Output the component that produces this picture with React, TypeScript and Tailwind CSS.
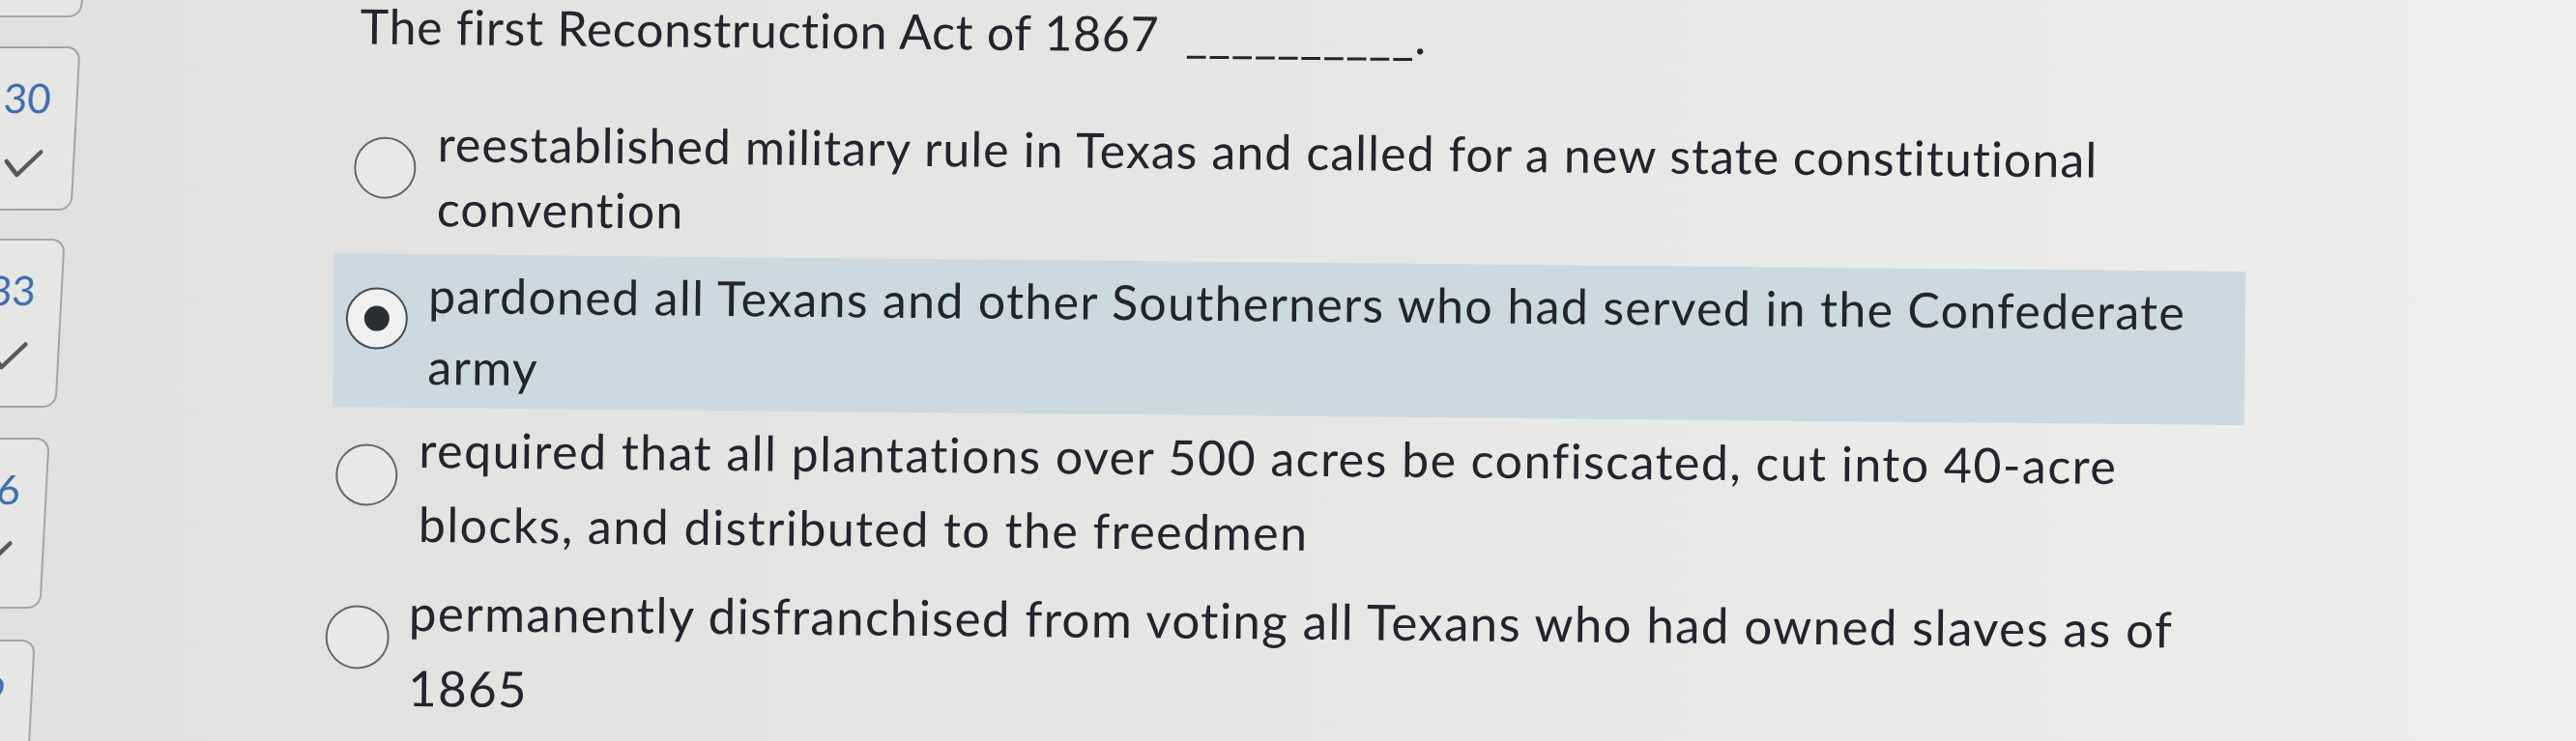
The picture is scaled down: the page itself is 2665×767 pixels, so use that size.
import React from 'react';

// Left rail of question tiles (only their right halves show at the page edge)
const tiles = [
  { id: 'a', num: '', cls: 'ml-[-11px] mt-[-142px] h-[160px]' },
  { id: 'b', num: '30', cls: 'ml-[-21px] mt-[30px] h-[170px]' },
  { id: 'c', num: '33', cls: 'ml-[-37px] mt-[29px] h-[175px]' },
  { id: 'd', num: '6', cls: 'ml-[-53px] mt-[31px] h-[177px]' },
  { id: 'e', num: '9', cls: 'ml-[-68px] mt-[32px] h-[180px]' },
];

const options = [
  {
    lines: ['reestablished military rule in Texas and called for a new state constitutional', 'convention'],
    row: 'ml-[248px] mt-[60px] gap-[22px]',
    text: 'text-[50px] leading-[67px] tracking-[0.022em]',
    radio: 'mt-[27px] size-[64px]',
  },
  {
    lines: ['pardoned all Texans and other Southerners who had served in the Confederate', 'army'],
    row: 'gap-[21px]',
    text: 'text-[50px] leading-[74px] tracking-[0.027em]',
    radio: 'mt-[30px] size-[64px]',
    selected: true,
  },
  {
    lines: ['required that all plantations over 500 acres be confiscated, cut into 40-acre', 'blocks, and distributed to the freedmen'],
    row: 'ml-[232px] mt-[5px] gap-[22px]',
    text: 'text-[50px] leading-[77px] tracking-[0.03em]',
    radio: 'mt-[33px] size-[64px]',
  },
  {
    lines: ['permanently disfranchised from voting all Texans who had owned slaves as of', '1865'],
    row: 'ml-[223px] mt-[14px] gap-[20px]',
    text: 'text-[51px] leading-[78px] tracking-[0.027em]',
    radio: 'mt-[32px] size-[66px]',
  },
];

const Check = () => (
  <svg width="40" height="30" viewBox="0 0 40 30" fill="none">
    <polyline points="2.5,12 14,26 37.5,2.5" stroke="#56595f" strokeWidth="4.5" strokeLinecap="round" strokeLinejoin="round" />
  </svg>
);

const Radio: React.FC<{ selected?: boolean; className: string }> = ({ selected, className }) => (
  <div
    className={`${className} shrink-0 rounded-full border-[2.5px] flex items-center justify-center ${
      selected ? 'border-[#4a4d53] bg-[#eff0ef]' : 'border-[#63666c] bg-[#e8e9e6]'
    }`}
  >
    {selected && <div className="size-[26px] rounded-full bg-[#2b2e33]" />}
  </div>
);

type Opt = (typeof options)[number];

const OptionRow: React.FC<{ opt: Opt }> = ({ opt }) => (
  <div className={`flex items-start ${opt.row}`}>
    <Radio selected={opt.selected} className={opt.radio} />
    <div className={`${opt.text} text-[#22252e] whitespace-nowrap`}>
      {opt.lines.map((l) => (
        <div key={l}>{l}</div>
      ))}
    </div>
  </div>
);

export default function App() {
  return (
    <div className="w-full h-[767px] overflow-hidden flex bg-linear-to-r from-[#e1e2df] via-[#e6e7e4] to-[#eeeeec] font-['Lato',sans-serif]">
      {/* question tiles */}
      <div className="w-[120px] shrink-0 flex flex-col">
        {tiles.map((t) => (
          <div
            key={t.id}
            className={`${t.cls} w-[100px] shrink-0 -skew-x-3 rounded-[14px] border-2 border-[#a3a5a7] bg-[#e6e7e4] flex flex-col items-end`}
          >
            {t.num && (
              <>
                <span className="pr-[26px] pt-[30px] text-[42px] leading-none text-[#3f6fb0]">{t.num}</span>
                <div className="pr-[31px] mt-[33px]">
                  <Check />
                </div>
              </>
            )}
          </div>
        ))}
      </div>

      {/* question body (slightly rotated like the photographed screen) */}
      <div className="flex-1 origin-top-left rotate-[0.55deg] flex flex-col">
        <h1 className="ml-[253px] mt-[-4px] text-[50px] leading-[56px] tracking-[0.015em] font-normal text-[#22252e] whitespace-nowrap">
          The first Reconstruction Act of 1867 &nbsp;__________.
        </h1>

        <OptionRow opt={options[0]} />

        <div className="ml-[228px] mt-[14px] w-[1978px] pt-[5px] pb-[6px] pl-[13px] bg-[#ccd9e0]">
          <OptionRow opt={options[1]} />
        </div>

        <OptionRow opt={options[2]} />
        <OptionRow opt={options[3]} />
      </div>
    </div>
  );
}
